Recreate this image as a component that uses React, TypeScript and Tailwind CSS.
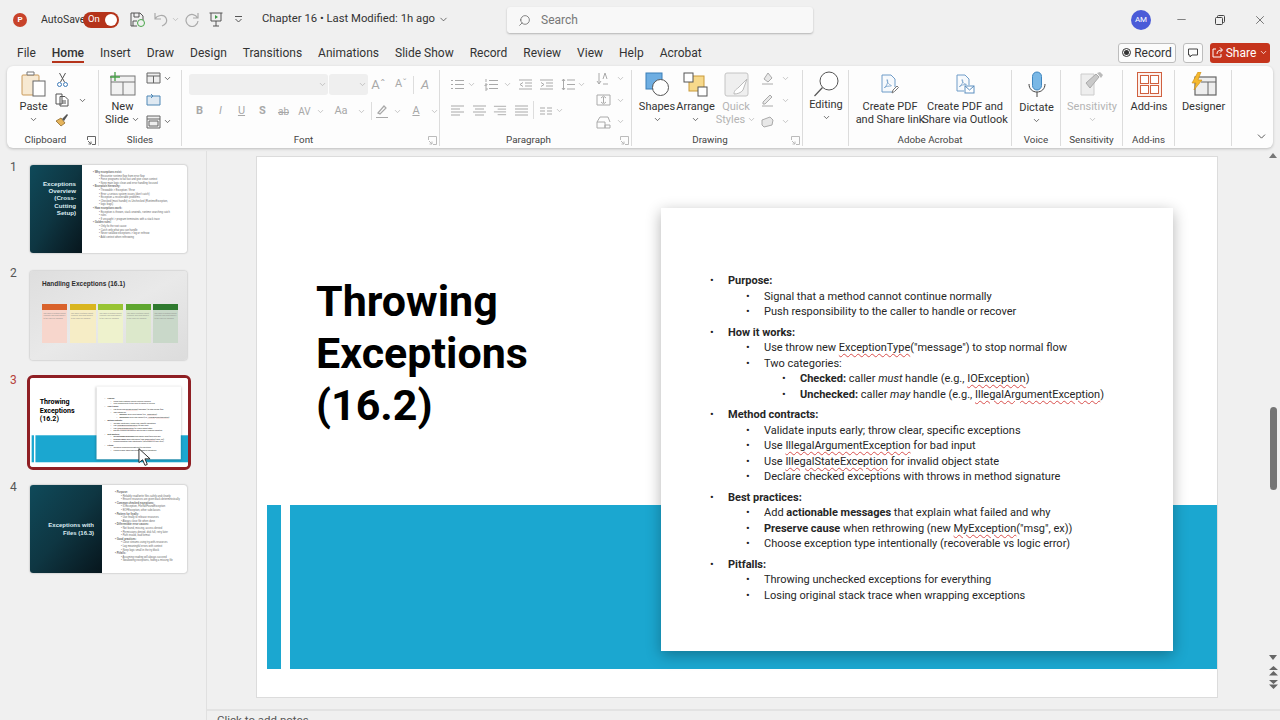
import type { ReactNode } from "react";
import { ChevronDown, Minus, Search, X } from "lucide-react";

const tabs = ["File", "Home", "Insert", "Draw", "Design", "Transitions", "Animations", "Slide Show", "Record", "Review", "View", "Help", "Acrobat"];

function Chev({ gray = false, cls = "" }: { gray?: boolean; cls?: string }) {
  return <ChevronDown size={9} strokeWidth={2} className={`shrink-0 ${gray ? "text-[#b5b5b5]" : "text-[#444]"} ${cls}`} />;
}

function Launcher({ gray = false }: { gray?: boolean }) {
  return (
    <svg width="9" height="9" viewBox="0 0 9 9" fill="none" stroke={gray ? "#bbb" : "#666"} strokeWidth="1">
      <path d="M.5 4V.5h8v8H5M1 5l3 3M4 5.5V8H1.5" />
    </svg>
  );
}

function Group({ w, label, launcher, gray, children, last }: { w: string; label?: string; launcher?: boolean; gray?: boolean; children: ReactNode; last?: boolean }) {
  return (
    <div className={`${w} shrink-0 h-[76px] flex flex-col ${last ? "" : "border-r border-[#dcdcdc]"}`}>
      <div className="flex-1 flex min-h-0">{children}</div>
      <div className="h-[12px] flex items-center relative">
        <div className={`flex-1 text-center text-[9.800px] leading-[12px] text-[#444] ${launcher ? "pr-[14px]" : ""}`}>{label}</div>
        {launcher && (
          <div className="absolute right-[2px] top-[2px]">
            <Launcher gray={gray} />
          </div>
        )}
      </div>
    </div>
  );
}

function Big({ w, icon, lines, chev, gray, inlineChev, textTop = "mt-[3px]" }: { w: string; icon: ReactNode; lines: string[]; chev?: boolean; gray?: boolean; inlineChev?: boolean; textTop?: string }) {
  return (
    <div className={`${w} shrink-0 flex flex-col items-center pt-[1px]`}>
      <div className="h-[26px] flex items-center justify-center">{icon}</div>
      <div className={`${textTop} text-[11px] leading-[13px] text-center whitespace-nowrap ${gray ? "text-[#b4b4b4]" : "text-[#333]"}`}>
        {lines.map((l, i) => (
          <div key={l} className="flex items-center justify-center gap-[2px]">
            {l}
            {inlineChev && i === lines.length - 1 && <Chev gray={gray} />}
          </div>
        ))}
      </div>
      {chev && (
        <div className="mt-[2px]">
          <Chev gray={gray} />
        </div>
      )}
    </div>
  );
}

function Cell({ w = "w-[21px]", children }: { w?: string; children?: ReactNode }) {
  return <div className={`${w} h-[20px] shrink-0 flex items-center justify-center`}>{children}</div>;
}

function Lines({ kind }: { kind: "left" | "center" | "right" | "just" | "bullet" | "num" | "out" | "in" | "space" | "cols" }) {
  const s = "#a9a9a9";
  const paths = {
    left: "M1 2h13M1 5h9M1 8h13M1 11h9",
    center: "M1 2h13M3 5h9M1 8h13M3 11h9",
    right: "M1 2h13M5 5h9M1 8h13M5 11h9",
    just: "M1 2h13M1 5h13M1 8h13M1 11h13",
    bullet: "M5 2.5h9M5 6.5h9M5 10.5h9M1 2.5h2M1 6.5h2M1 10.5h2",
    num: "M5 2.5h9M5 6.5h9M5 10.5h9M2 1v3M1 6h2v1H1v1h2M1 10h2v2H1",
    out: "M1 2h13M7 5h7M7 8h7M1 11h13M5 4.5l-3 2 3 2",
    in: "M1 2h13M7 5h7M7 8h7M1 11h13M2 4.5l3 2-3 2",
    space: "M6 2h8M6 6.5h8M6 11h8M2.5 1v11M1 3l1.500-2L4 3M1 10l1.500 2L4 10",
    cols: "M1 4h5M8 4h5M1 7h5M8 7h5M1 10h5M8 10h5",
  };
  return (
    <svg width="15" height="13" viewBox="0 0 15 13" fill="none" stroke={s} strokeWidth="1">
      <path d={paths[kind]} />
    </svg>
  );
}

function Ribbon() {
  const g = "text-[#a8a8a8]";
  return (
    <div className="mx-[7px] h-[82px] bg-[#fdfdfd] rounded-[6px] shadow-[0_1px_3px_rgba(0,0,0,0.22)] flex items-start pt-[4px] relative">
      {/* Clipboard */}
      <Group w="w-[92px]" label="Clipboard" launcher>
        <Big
          w="w-[53px]"
          chev
          lines={["Paste"]}
          icon={
            <svg width="25" height="26" viewBox="0 0 25 26" fill="none">
              <rect x="1" y="4" width="17" height="20" rx="1" fill="#f7e9d2" stroke="#c99a5b" />
              <path d="M6 4h7V1H6z" fill="#fff" stroke="#777" />
              <rect x="12" y="10" width="12" height="15" fill="#fff" stroke="#666" />
            </svg>
          }
        />
        <div className="-ml-[8px] w-[39px] flex flex-col">
          <div className="w-[20px] h-[20px] flex items-center justify-center">
            <svg width="11" height="15" viewBox="0 0 11 15" fill="none" stroke="#555">
              <path d="M2.500 0l5 9M8.500 0l-5 9" />
              <circle cx="2.500" cy="11.500" r="2" stroke="#3d7ab8" />
              <circle cx="8.500" cy="11.500" r="2" stroke="#3d7ab8" />
            </svg>
          </div>
          <div className="flex items-center">
            <div className="w-[20px] h-[20px] flex items-center justify-center">
              <svg width="14" height="14" viewBox="0 0 14 14" fill="none" stroke="#555">
                <path d="M1 1h6v10H1zM5 3.500h5l3 3V13H5z" fill="#fff" />
                <path d="M7 8h4M7 10h4" />
              </svg>
            </div>
            <Chev cls="ml-[6px]" />
          </div>
          <div className="w-[20px] h-[20px] flex items-center justify-center">
            <svg width="14" height="14" viewBox="0 0 14 14">
              <path d="M1 8l5-3 4 5-4 3z" fill="#e5b45c" stroke="#8f6a2a" strokeWidth=".8" />
              <path d="M7 6l5-5 1 1-4 6z" fill="#555" />
            </svg>
          </div>
        </div>
      </Group>

      {/* Slides */}
      <Group w="w-[83px]" label="Slides">
        <Big
          w="w-[47px]"
          inlineChev
          lines={["New", "Slide"]}
          icon={
            <svg width="27" height="24" viewBox="0 0 27 24" fill="none">
              <rect x="2" y="4" width="24" height="19" fill="#f1f1f1" stroke="#777" />
              <path d="M2 10h24M14 10v13" stroke="#777" />
              <path d="M6 0v9M1 5h10" stroke="#46a046" strokeWidth="1.300" />
            </svg>
          }
        />
        <div className="flex flex-col -mt-[2px]">
          {["M1 1h13v10H1zM7.500 4v7M1 4h13", "M1 3h13v9H1zM5 1l2 2-2 2", "M1 1h13v12H1zM1 4h13M3 6h9v5H3z"].map((d, i) => (
            <div key={d} className="flex items-center h-[21.500px]">
              <svg width="15" height="14" viewBox="0 0 15 14" fill={i === 1 ? "#dfe9f2" : "#eee"} stroke={i === 1 ? "#4f87b5" : "#666"}>
                <path d={d} />
              </svg>
              {i !== 1 && <Chev cls="ml-[2px]" />}
            </div>
          ))}
        </div>
      </Group>

      {/* Font */}
      <Group w="w-[258px]" label="Font" launcher gray>
        <div className="flex flex-col pl-[7px] pt-[4px]">
          <div className="flex items-center h-[21px]">
            <div className="w-[139px] h-[21px] bg-[#efefef] rounded-[3px] flex items-center justify-end pr-[1px]">
              <Chev gray />
            </div>
            <div className="ml-[1px] w-[39px] h-[21px] bg-[#efefef] rounded-[3px] flex items-center justify-end pr-[1px]">
              <Chev gray />
            </div>
            <div className={`w-[21px] text-center text-[13px] ${g}`}>Aˆ</div>
            <div className={`w-[24px] text-center text-[11px] ${g}`}>Aˇ</div>
            <div className="w-px h-[18px] bg-[#ddd]" />
            <div className={`w-[22px] text-center text-[13px] italic ${g}`}>A</div>
          </div>
          <div className="flex items-center h-[20px] mt-[6px]">
            <Cell><span className={`text-[11px] font-bold ${g}`}>B</span></Cell>
            <Cell><span className={`text-[11px] italic ${g}`}>I</span></Cell>
            <Cell><span className={`text-[11px] underline ${g}`}>U</span></Cell>
            <Cell><span className={`text-[11px] font-bold ${g}`}>S</span></Cell>
            <Cell><span className={`text-[10px] line-through ${g}`}>ab</span></Cell>
            <Cell><span className={`text-[10px] ${g}`}>AV</span></Cell>
            <Chev gray cls="ml-[1px]" />
            <div className={`w-[32px] text-center text-[11px] ${g}`}>Aa</div>
            <Chev gray />
            <div className="ml-[5px] w-px h-[18px] bg-[#ddd]" />
            <Cell w="w-[20px]">
              <svg width="14" height="15" viewBox="0 0 14 15" fill="none" stroke="#a8a8a8">
                <path d="M3 9l6-7 2 2-6 6zM1 13.500h12" strokeWidth="1.200" />
              </svg>
            </Cell>
            <Chev gray cls="ml-[1px]" />
            <Cell w="w-[28px]">
              <span className={`text-[11px] underline ${g}`}>A</span>
            </Cell>
            <Chev gray />
          </div>
        </div>
      </Group>

      {/* Paragraph */}
      <Group w="w-[192px]" label="Paragraph" launcher gray>
        <div className="flex flex-col pl-[9px] pt-[4px] w-[154px]">
          <div className="flex items-center h-[20px]">
            <Cell w="w-[16px]"><Lines kind="bullet" /></Cell>
            <Chev gray cls="ml-[2px]" />
            <Cell w="w-[30px]"><Lines kind="num" /></Cell>
            <Chev gray cls="-ml-[3px]" />
            <Cell w="w-[26px]"><Lines kind="out" /></Cell>
            <Cell w="w-[16px]"><Lines kind="in" /></Cell>
            <Cell w="w-[28px]"><Lines kind="space" /></Cell>
            <Chev gray cls="-ml-[5px]" />
          </div>
          <div className="flex items-center h-[20px] mt-[6px]">
            <Cell w="w-[16px]"><Lines kind="left" /></Cell>
            <Cell w="w-[28px]"><Lines kind="center" /></Cell>
            <Cell w="w-[14px]"><Lines kind="right" /></Cell>
            <Cell w="w-[28px]"><Lines kind="just" /></Cell>
            <div className="-ml-[2px] w-px h-[18px] bg-[#ddd]" />
            <Cell w="w-[24px]"><Lines kind="cols" /></Cell>
            <Chev gray cls="-ml-[3px]" />
          </div>
        </div>
        <div className="flex flex-col -mt-[2px] ml-[2px]">
          {["M3 1v11M1 9l2 3 2-3M9 1l-2 6M9 1l2 6M7 12h5", "M1 2h13v10H1zM7.500 4v6M5 5l2.500-2L10 5M5 9l2.500 2L10 9", "M1 7h8v6H1zM1 7l3-5h8l2 5M9 10h5v3H9z"].map((d) => (
            <div key={d} className="flex items-center h-[21.500px]">
              <svg width="15" height="14" viewBox="0 0 15 14" fill="none" stroke="#aaa">
                <path d={d} />
              </svg>
              <Chev gray cls="ml-[5px]" />
            </div>
          ))}
        </div>
      </Group>

      {/* Drawing */}
      <Group w="w-[171px]" label="Drawing" launcher gray>
        <Big
          w="w-[50px]"
          chev
          lines={["Shapes"]}
          icon={
            <svg width="25" height="25" viewBox="0 0 25 25" fill="none">
              <rect x="1" y="1" width="16" height="16" fill="#6eaee2" stroke="#3b7fb8" />
              <circle cx="15.500" cy="15.500" r="8" fill="#fff" stroke="#555" />
            </svg>
          }
        />
        <Big
          w="w-[27px]"
          chev
          lines={["Arrange"]}
          icon={
            <svg width="25" height="25" viewBox="0 0 25 25" fill="none">
              <rect x="6" y="4" width="15" height="15" fill="#f7d98b" stroke="#c99a3a" />
              <rect x="1" y="1" width="9" height="9" fill="#fff" stroke="#555" />
              <rect x="15" y="15" width="9" height="9" fill="#fff" stroke="#555" />
            </svg>
          }
        />
        <Big
          w="w-[54px]"
          gray
          inlineChev
          lines={["Quick", "Styles"]}
          icon={
            <svg width="25" height="25" viewBox="0 0 25 25" fill="none">
              <rect x="1" y="1" width="23" height="23" rx="2" fill="#efefef" stroke="#c4c4c4" />
              <path d="M10 22c0-4 3-5 4-6l9-9-4 11c-2 3-6 4-9 4z" fill="#fff" stroke="#bbb" />
            </svg>
          }
        />
        <div className="flex flex-col -mt-[2px] -ml-[3px]">
          {["M4 8l4-6 4 5-4 4zM2 13h11", "M3 9l7-7 2 2-7 7H3zM2 13h11", "M2 6l8-3 3 3-1 5-8 2-2-2z"].map((d) => (
            <div key={d} className="flex items-center h-[21.500px]">
              <svg width="15" height="15" viewBox="0 0 15 15" fill="#e8e8e8" stroke="#aaa">
                <path d={d} />
              </svg>
              <Chev gray cls="ml-[6px]" />
            </div>
          ))}
        </div>
      </Group>

      {/* Editing */}
      <Group w="w-[46px]">
        <Big
          w="w-[46px]"
          chev
          textTop="mt-[1px]"
          lines={["Editing"]}
          icon={
            <svg width="26" height="27" viewBox="0 0 26 27" fill="none" stroke="#555" strokeWidth="1">
              <circle cx="16" cy="10" r="9" fill="#fff" />
              <path d="M9.500 16.500L1.500 25" strokeWidth="1.200" />
            </svg>
          }
        />
      </Group>

      {/* Adobe Acrobat */}
      <Group w="w-[163px]" label="Adobe Acrobat">
        <Big
          w="w-[82px]"
          lines={["Create PDF", "and Share link"]}
          icon={
            <svg width="18" height="20" viewBox="0 0 18 20" fill="none" stroke="#6f9cc8">
              <path d="M1 1h9l4 4v8M11 18H1V1" fill="#f6f9fc" />
              <path d="M3.500 14c2-2 4-6 3-8s-1 3 3 5-6 0-6 3z" strokeWidth=".8" />
              <path d="M11 19l1-3 4-4 1.500 1.500-4 4z" stroke="#777" />
            </svg>
          }
        />
        <Big
          w="w-[68px]"
          lines={["Create PDF and", "Share via Outlook"]}
          icon={
            <svg width="19" height="20" viewBox="0 0 19 20" fill="none" stroke="#6f9cc8">
              <path d="M1 1h8l4 4v6M8 17H1V1" fill="#f6f9fc" />
              <path d="M3.500 13c2-2 4-5 3-7s-1 3 3 4-6 0-6 3z" strokeWidth=".8" />
              <rect x="9" y="12" width="9" height="7" fill="#fff" stroke="#5d8fc0" />
              <path d="M9 12l4.500 4 4.500-4" stroke="#5d8fc0" />
            </svg>
          }
        />
      </Group>

      {/* Voice */}
      <Group w="w-[49px]" label="Voice">
        <Big
          w="w-[49px]"
          chev
          textTop="mt-[4px]"
          lines={["Dictate"]}
          icon={
            <svg width="18" height="27" viewBox="0 0 18 27" fill="none">
              <rect x="4.500" y="1" width="9" height="18" rx="4.500" fill="#7ab8e6" stroke="#3f86bf" />
              <path d="M1 13c0 5 3.500 8 8 8s8-3 8-8M9 21v5" stroke="#444" />
            </svg>
          }
        />
      </Group>

      {/* Sensitivity */}
      <Group w="w-[62px]" label="Sensitivity">
        <Big
          w="w-[62px]"
          gray
          chev
          lines={["Sensitivity"]}
          icon={
            <svg width="24" height="26" viewBox="0 0 24 26" fill="none">
              <path d="M1 3h13v21H1z" fill="#eee" stroke="#ccc" />
              <path d="M6 12l10-9 3 3-9 11z" fill="#c9c9c9" stroke="#aaa" />
              <path d="M17 2l3-1 3 3-2 3z" fill="#bbb" />
            </svg>
          }
        />
      </Group>

      {/* Add-ins */}
      <Group w="w-[52px]" label="Add-ins">
        <Big
          w="w-[52px]"
          lines={["Add-ins"]}
          icon={
            <svg width="25" height="25" viewBox="0 0 25 25" fill="none" stroke="#d0603f">
              <rect x=".5" y=".5" width="24" height="24" fill="#fdf1ec" />
              <rect x="3.500" y="3.500" width="8" height="8" fill="#fff" />
              <rect x="13.500" y="3.500" width="8" height="8" fill="#fff" />
              <rect x="3.500" y="13.500" width="8" height="8" fill="#fff" />
              <rect x="13.500" y="13.500" width="8" height="8" fill="#fff" />
            </svg>
          }
        />
      </Group>

      {/* Designer */}
      <Group w="w-[57px]">
        <Big
          w="w-[57px]"
          lines={["Designer"]}
          icon={
            <svg width="26" height="25" viewBox="0 0 26 25" fill="none">
              <rect x="4" y="5" width="21" height="18" fill="#eee" stroke="#666" strokeWidth="1.200" />
              <path d="M10 10h15M17 10v13" stroke="#666" />
              <path d="M7 0L1 11h4l-2 7 8-10H7l3-8z" fill="#f5b92e" stroke="#c98c14" strokeWidth=".6" />
            </svg>
          }
        />
      </Group>

      <ChevronDown size={13} strokeWidth={1.600} className="absolute right-[5px] top-[64px] text-[#444]" />
    </div>
  );
}

function Item({ level, children }: { level: 0 | 1 | 2; children: ReactNode }) {
  const pad = level === 0 ? "pl-[49px]" : level === 1 ? "pl-[85px]" : "pl-[121px]";
  return (
    <div className={`${pad} flex h-[15.5px] leading-[15.5px] whitespace-nowrap`}>
      <span className="w-[18px] shrink-0 text-[#222]">•</span>
      <span>{children}</span>
    </div>
  );
}

function Sq({ children }: { children: ReactNode }) {
  return <span className="underline decoration-wavy decoration-[#d8504d] decoration-1 underline-offset-2">{children}</span>;
}

function SlideThree() {
  return (
    <div className="w-[960px] h-[540px] bg-white relative font-['Roboto',sans-serif]">
      <div className="absolute left-[10px] top-[348px] w-[14px] h-[164px] bg-[#1ba7d0]" />
      <div className="absolute left-[33px] top-[348px] w-[927px] h-[164px] bg-[#1ba7d0]" />
      <div className="absolute left-[59px] top-[118px] text-[43px] leading-[52px] font-bold text-black">
        Throwing
        <br />
        Exceptions
        <br />
        (16.2)
      </div>
      <div className="absolute left-[404px] top-[51px] w-[512px] h-[443px] bg-white shadow-[0_4px_14px_rgba(0,0,0,0.3)] pt-[65px] text-[11px] text-[#262626]">
        <Item level={0}><b>Purpose:</b></Item>
        <Item level={1}>Signal that a method cannot continue normally</Item>
        <Item level={1}>Push responsibility to the caller to handle or recover</Item>
        <div className="h-[5px]" />
        <Item level={0}><b>How it works:</b></Item>
        <Item level={1}>Use throw new <Sq>ExceptionType</Sq>("message") to stop normal flow</Item>
        <Item level={1}>Two categories:</Item>
        <Item level={2}><b>Checked:</b> caller <i>must</i> handle (e.g., <Sq>IOException</Sq>)</Item>
        <Item level={2}><b>Unchecked:</b> caller <i>may</i> handle (e.g., <Sq>IllegalArgumentException</Sq>)</Item>
        <div className="h-[5px]" />
        <Item level={0}><b>Method contracts:</b></Item>
        <Item level={1}>Validate inputs early; throw clear, specific exceptions</Item>
        <Item level={1}>Use <Sq>IllegalArgumentException</Sq> for bad input</Item>
        <Item level={1}>Use <Sq>IllegalStateException</Sq> for invalid object state</Item>
        <Item level={1}>Declare checked exceptions with throws in method signature</Item>
        <div className="h-[5px]" />
        <Item level={0}><b>Best practices:</b></Item>
        <Item level={1}>Add <b>actionable messages</b> that explain what failed and why</Item>
        <Item level={1}><b>Preserve cause</b> when rethrowing (new <Sq>MyException</Sq>("msg", ex))</Item>
        <Item level={1}>Choose exception type intentionally (recoverable vs logic error)</Item>
        <div className="h-[5px]" />
        <Item level={0}><b>Pitfalls:</b></Item>
        <Item level={1}>Throwing unchecked exceptions for everything</Item>
        <Item level={1}>Losing original stack trace when wrapping exceptions</Item>
      </div>
    </div>
  );
}

function TinyList({ rows }: { rows: [number, string][] }) {
  return (
    <div className="text-[2.600px] leading-[3.600px] text-[#666] whitespace-nowrap">
      {rows.map(([lvl, t], i) => (
        <div key={i} className={lvl === 0 ? "font-bold" : "pl-[6px]"}>
          • {t}
        </div>
      ))}
    </div>
  );
}

const thumbOne: [number, string][] = [
  [0, "Why exceptions exist:"],
  [1, "Encounter runtime flow from error flow"],
  [1, "Force programs to fail fast and give clean context"],
  [1, "Keep main logic clean and error handling focused"],
  [0, "Exception hierarchy:"],
  [1, "Throwable > Exception / Error"],
  [1, "Error = serious system issues (don't catch)"],
  [1, "Exception = recoverable problems"],
  [1, "Checked (must handle) vs Unchecked (RuntimeException,"],
  [1, "logic bugs)"],
  [0, "How exceptions work:"],
  [1, "Exception is thrown, stack unwinds, runtime searching catch"],
  [1, "rules"],
  [1, "If uncaught > program terminates with a stack trace"],
  [0, "Golden rules:"],
  [1, "Only fix the root cause"],
  [1, "Catch only what you can handle"],
  [1, "Never swallow exceptions > log or rethrow"],
  [1, "Add context when rethrowing"],
];

const thumbFour: [number, string][] = [
  [0, "Purpose:"],
  [1, "Reliably read/write files safely and cleanly"],
  [1, "Ensure resources are given back deterministically"],
  [0, "Common checked exceptions:"],
  [1, "IOException, FileNotFoundException"],
  [1, "EOFException, other subclasses"],
  [0, "Pattern for finally:"],
  [1, "Use finally to release resources"],
  [1, "Always close file when done"],
  [0, "Differentiate error causes:"],
  [1, "Not found, missing, access denied"],
  [1, "Permissions denied, disk full, retry later"],
  [1, "Path invalid, bad format"],
  [0, "Good practices:"],
  [1, "Close streams using try-with-resources"],
  [1, "Log meaningful errors with context"],
  [1, "Keep logic small in the try block"],
  [0, "Pitfalls:"],
  [1, "Assuming reading will always succeed"],
  [1, "Swallowing exceptions, hiding a missing file"],
];

function DarkThumb({ left, title, titleCls, rows, listCls }: { left: string; title: ReactNode; titleCls: string; rows: [number, string][]; listCls: string }) {
  return (
    <div className="w-[157px] h-full bg-white rounded-[3px] overflow-hidden shadow-[0_0_2px_rgba(0,0,0,0.35)] flex font-['Liberation_Sans',sans-serif]">
      <div className={`${left} h-full shrink-0 bg-gradient-to-br from-[#0f4a5a] via-[#0e3642] to-[#07161d] flex items-center justify-end`}>
        <div className={`text-right font-bold text-[#dcecf2] ${titleCls}`}>{title}</div>
      </div>
      <div className={listCls}>
        <TinyList rows={rows} />
      </div>
    </div>
  );
}

function ThumbTwo() {
  const cols = [
    ["bg-[#d9622b]", "bg-[#f7d6cc]", "w-[25px]"],
    ["bg-[#d9b51f]", "bg-[#f6edc6]", "w-[26px]"],
    ["bg-[#98c433]", "bg-[#eef2cd]", "w-[25px]"],
    ["bg-[#5ea62f]", "bg-[#dce8cb]", "w-[25px]"],
    ["bg-[#2f7a2f]", "bg-[#c9d8c9]", "w-[25px]"],
  ];
  return (
    <div className="w-[157px] h-[89px] rounded-[3px] bg-gradient-to-br from-[#dedede] via-[#e9e9e9] to-[#dcdcdc] shadow-[0_0_2px_rgba(0,0,0,0.35)] pl-[12px] pt-[9px] font-['Liberation_Sans',sans-serif]">
      <div className="text-[6.500px] leading-[8px] font-bold text-[#2d2d2d]">Handling Exceptions (16.1)</div>
      <div className="flex gap-[2.500px] mt-[16px]">
        {cols.map(([head, body, w]) => (
          <div key={head} className={w}>
            <div className={`${head} h-[6px]`} />
            <div className={`${body} h-[33px] p-[1.500px] text-[1.800px] leading-[2.500px] text-[#888]`}>
              Use when a method cannot complete and must signal it to the caller for handling
            </div>
          </div>
        ))}
      </div>
    </div>
  );
}

function Thumbnails() {
  return (
    <div className="w-[207px] shrink-0 border-r border-[#e0e0e0] pt-[14px] relative h-full">
      <div className="flex h-[88px] pl-[10px]">
        <div className="w-[20px] text-[12px] leading-[5px] text-[#555]">1</div>
        <DarkThumb
          left="w-[52px]"
          titleCls="text-[6.200px] leading-[7.300px] pr-[6px] -mt-[22px]"
          title={<>Exceptions<br />Overview<br />(Cross-<br />Cutting<br />Setup)</>}
          rows={thumbOne}
          listCls="pl-[11px] pt-[6px]"
        />
      </div>
      <div className="flex h-[89px] pl-[10px] mt-[18px]">
        <div className="w-[20px] text-[12px] leading-[5px] text-[#555]">2</div>
        <ThumbTwo />
      </div>
      <div className="flex h-[95px] pl-[10px] mt-[15px]">
        <div className="w-[17px] text-[12px] leading-[5px] pt-[3px] text-[#b5403a]">3</div>
        <div className="w-[164px] h-[95px] border-[3px] border-[#8f1f24] rounded-[6px] overflow-hidden relative">
          <div className="absolute left-0 top-0 origin-top-left scale-[0.1646]">
            <SlideThree />
          </div>
        </div>
      </div>
      <div className="flex h-[88px] pl-[10px] mt-[15px]">
        <div className="w-[20px] text-[12px] leading-[5px] text-[#555]">4</div>
        <DarkThumb
          left="w-[72px]"
          titleCls="text-[6px] leading-[8px] pr-[8px]"
          title={<>Exceptions with<br />Files (16.3)</>}
          rows={thumbFour}
          listCls="pl-[13px] pt-[6px]"
        />
      </div>
      {/* mouse cursor */}
      <svg className="absolute left-[138px] top-[296px]" width="13" height="20" viewBox="0 0 14 20">
        <path d="M1 1v15l4-3 2.500 6 2.500-1-2.500-6H13z" fill="#fff" stroke="#222" strokeWidth="1" />
      </svg>
    </div>
  );
}

function Scrollbar() {
  return (
    <div className="w-[14px] shrink-0 flex flex-col items-center h-full relative">
      <svg className="mt-[2px]" width="8" height="5" viewBox="0 0 8 5" fill="#777"><path d="M4 0l4 5H0z" /></svg>
      <div className="mt-[249px] w-[7px] h-[83px] rounded-full bg-[#757575]" />
      <svg className="mt-[165px]" width="8" height="5" viewBox="0 0 8 5" fill="#666"><path d="M4 5L0 0h8z" /></svg>
      <svg className="mt-[6px]" width="9" height="10" viewBox="0 0 9 10" fill="#666"><path d="M4.500 0L9 4H0zM4.500 5L9 9.500H0z" /></svg>
      <svg className="mt-[3px]" width="9" height="10" viewBox="0 0 9 10" fill="#666"><path d="M4.500 5L0 1h9zM4.500 10L0 5.500h9z" /></svg>
    </div>
  );
}

export default function App() {
  return (
    <div className="w-[1280px] h-[720px] overflow-hidden bg-[#f0f0f0] text-[#333] font-['Roboto',sans-serif] flex flex-col">
      {/* Title bar */}
      <div className="h-[39px] shrink-0 flex items-center relative">
        <div className="ml-[13px] w-[14px] h-[14px] rounded-full bg-[#c8432a] text-white text-[8px] font-bold flex items-center justify-center">P</div>
        <div className="ml-[14px] w-[35px] text-[10.500px] text-[#333] whitespace-nowrap">AutoSave</div>
        <div className="ml-[7px] w-[36px] h-[16px] rounded-full bg-[#b5341b] flex items-center justify-between pl-[5px] pr-[2px]">
          <span className="text-[9.500px] text-white">On</span>
          <span className="w-[12px] h-[12px] rounded-full bg-white" />
        </div>
        <svg className="ml-[11px]" width="15" height="15" viewBox="0 0 15 15" fill="none" stroke="#555">
          <path d="M1 1h9l3 3v4M7 14H1V1M4 1v4h5V1M3 14V9h4" />
          <circle cx="11" cy="11" r="3.500" stroke="#4aa64a" />
        </svg>
        <svg className="ml-[9px]" width="14" height="15" viewBox="0 0 14 15" fill="none" stroke="#aaa" strokeWidth="1.200">
          <path d="M1 1v6h6M1 7c2-4 9-5 11-1s-1 7-4 8" />
        </svg>
        <Chev gray cls="ml-[3px]" />
        <svg className="ml-[5px]" width="14" height="15" viewBox="0 0 14 15" fill="none" stroke="#aaa" strokeWidth="1.200">
          <path d="M13 1v5H8M12.500 6A6 6 0 1 0 13 9" />
        </svg>
        <svg className="ml-[10px]" width="14" height="15" viewBox="0 0 14 15" fill="none" stroke="#555">
          <path d="M.5 1h13M2 1v8h10V1M7 9v5M4 14h6" />
          <path d="M6 3l3 2-3 2z" fill="#3f9a46" stroke="none" />
        </svg>
        <svg className="ml-[11px]" width="9" height="9" viewBox="0 0 9 9" fill="none" stroke="#555">
          <path d="M1 1.500h7M1.500 4L4.500 7 7.500 4" />
        </svg>
        <div className="ml-[19px] text-[11.300px] text-[#333] flex items-center gap-[3px] whitespace-nowrap">
          Chapter 16 • Last Modified: 1h ago
          <ChevronDown size={11} strokeWidth={1.500} />
        </div>
        <div className="absolute left-[507px] top-[7px] w-[306px] h-[26px] bg-[#f8f8f8] rounded-[3px] shadow-[0_1px_2px_rgba(0,0,0,0.25)] flex items-center pl-[11px]">
          <Search size={13} strokeWidth={1.300} className="text-[#555] -scale-x-100" />
          <span className="ml-[10px] text-[12px] text-[#777]">Search</span>
        </div>
        <div className="ml-auto flex items-center">
          <div className="w-[20px] h-[20px] rounded-full bg-[#4a5bd8] text-white text-[8px] flex items-center justify-center">AM</div>
          <Minus size={13} strokeWidth={1.200} className="ml-[24px] text-[#444]" />
          <svg className="ml-[27px]" width="10" height="10" viewBox="0 0 10 10" fill="none" stroke="#444">
            <rect x=".5" y="2.500" width="7" height="7" rx="1" />
            <path d="M2.500 2.500V1.500q0-1 1-1h5q1 0 1 1v5q0 1-1 1H7.500" />
          </svg>
          <X size={14} strokeWidth={1.200} className="ml-[28px] mr-[13px] text-[#444]" />
        </div>
      </div>

      {/* Tabs */}
      <div className="h-[27px] shrink-0 flex items-center relative pl-[17px] gap-[16px] text-[12px] text-[#333]">
        {tabs.map((t) => (
          <div key={t} className="relative whitespace-nowrap pt-[1px]">
            <span className={t === "Home" ? "font-medium" : ""}>{t}</span>
            {t === "Home" && <div className="absolute left-0 right-0 top-[18px] h-[2px] bg-[#b5341b]" />}
          </div>
        ))}
        <div className="ml-auto flex items-center h-[20px] mr-[10px] text-[12px]">
          <div className="w-[58px] h-[20px] bg-[#fbfbfb] border border-[#bdbdbd] rounded-[3px] flex items-center justify-center gap-[3px]">
            <span className="w-[9px] h-[9px] rounded-full border border-[#333] flex items-center justify-center">
              <span className="w-[5px] h-[5px] rounded-full bg-[#333]" />
            </span>
            Record
          </div>
          <div className="ml-[7px] w-[20px] h-[20px] bg-[#fbfbfb] border border-[#bdbdbd] rounded-[3px] flex items-center justify-center">
            <svg width="10" height="10" viewBox="0 0 10 10" fill="none" stroke="#444"><path d="M.5 1h9v6H4L2 9V7H.5z" /></svg>
          </div>
          <div className="ml-[7px] w-[60px] h-[20px] bg-[#c5341c] text-white rounded-[3px] flex items-center justify-center gap-[3px]">
            <svg width="11" height="11" viewBox="0 0 11 11" fill="none" stroke="#fff"><path d="M4 2H1v8h8V7M5 7c0-3 2-4 5-4M8 .5L10.500 3 8 5.500" /></svg>
            Share
            <ChevronDown size={9} strokeWidth={2} />
          </div>
        </div>
      </div>

      <Ribbon />

      {/* Work area */}
      <div className="flex-1 min-h-0 flex mt-[3px]">
        <Thumbnails />
        <div className="flex-1 min-w-0 flex flex-col">
          <div className="flex-1 min-h-0 flex">
            <div className="flex-1 min-w-0 pl-[49px] pt-[5px]">
              <div className="w-[962px] h-[542px] border border-[#dcdcdc]">
                <SlideThree />
              </div>
            </div>
            <Scrollbar />
          </div>
          <div className="h-[11px] shrink-0 border-t-2 border-[#e3e3e3] pl-[10px] pt-[2px] text-[11.500px] leading-[14px] text-[#555] overflow-hidden whitespace-nowrap">
            Click to add notes
          </div>
        </div>
      </div>
    </div>
  );
}
